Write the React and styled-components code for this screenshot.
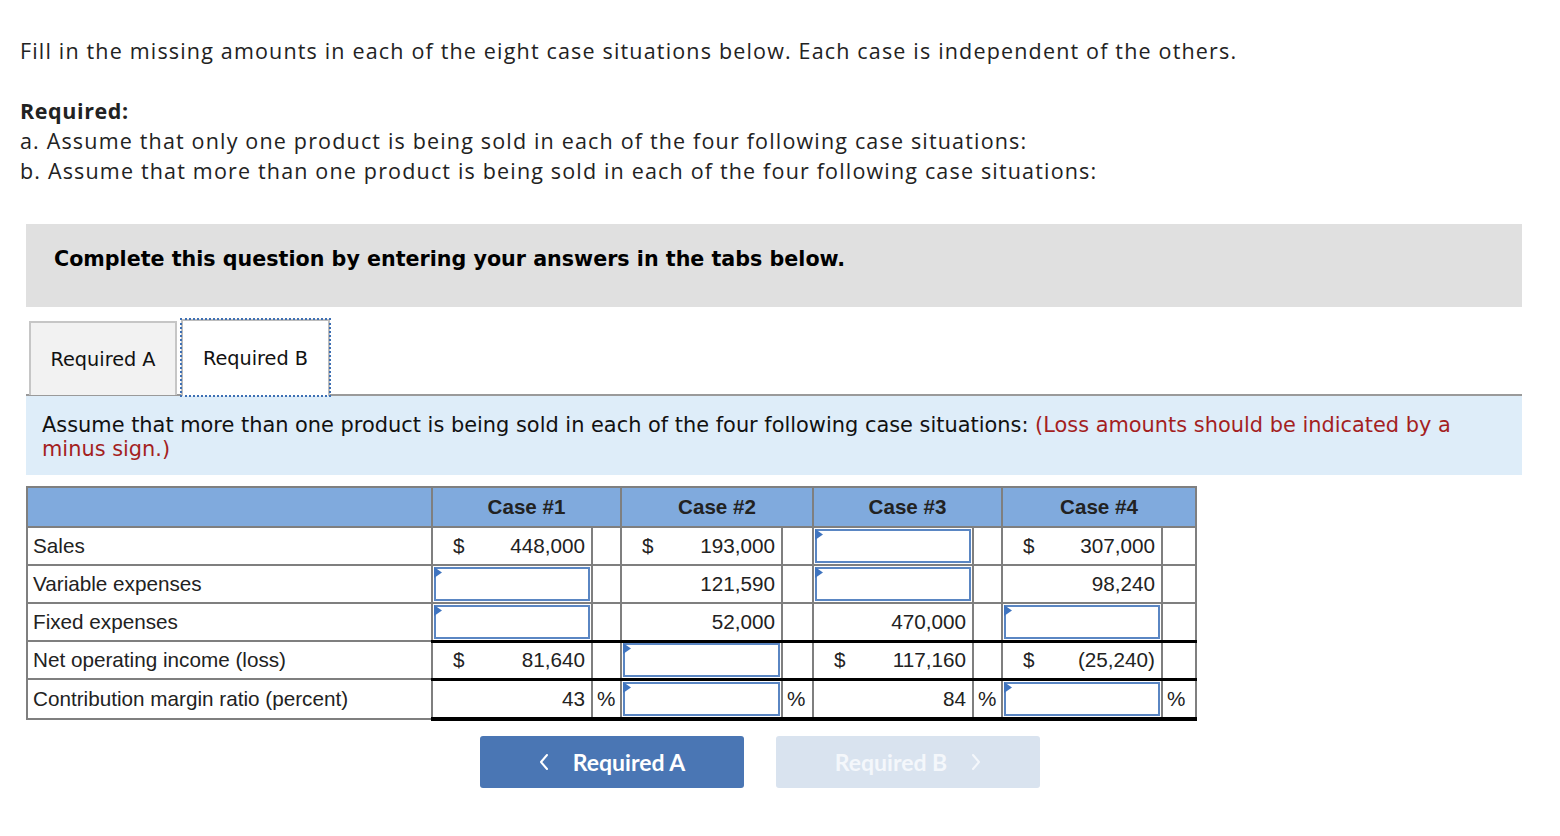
import React from "react";
import styled, { createGlobalStyle, css } from "styled-components";

const Global = createGlobalStyle`
  html, body { margin: 0; padding: 0; background: #fff; }
  body { font-family: "Open Sans", sans-serif; color: #222; }
  * { box-sizing: border-box; }
`;

const Page = styled.div`
  width: 1560px;
  padding: 36px 20px 40px 20px;
`;

const Intro = styled.div`
  font-family: "Open Sans", "Lato", sans-serif;
  font-size: 21.5px;
  letter-spacing: 1.17px;
  line-height: 30px;
  color: #222;
`;

const Para = styled.p`
  margin: 0 0 30px 0;
`;

const Strong = styled.div`
  font-weight: 700;
  letter-spacing: 0.6px;
`;

const Panel = styled.div`
  margin: 38px 18px 0 6px;
`;

const Banner = styled.div`
  background: #e0e0e0;
  height: 83px;
  padding: 23px 28px;
  font-family: "DejaVu Sans", Verdana, sans-serif;
  font-weight: 700;
  font-size: 20.65px;
  line-height: 24px;
  color: #000;
`;

const TabBar = styled.div`
  display: flex;
  align-items: flex-end;
  gap: 4px;
  padding-left: 3px;
  border-bottom: 2px solid #9a9a9a;
  height: 89px;
`;

const Tab = styled.div`
  width: 148px;
  height: 74px;
  display: flex;
  align-items: center;
  justify-content: center;
  font-family: "DejaVu Sans", Verdana, sans-serif;
  font-size: 19.3px;
  color: #111;
  border: 2px solid #c6c6c6;
  border-bottom: none;
  background: #f2f2f2;
  margin-bottom: -1px;
  ${(p) =>
    p.$active &&
    css`
      background: #fff;
      height: 77px;
      width: 149px;
      border-color: #bdbdbd;
      outline: 2px dotted #3d6fb3;
      outline-offset: -1px;
      margin-bottom: -2px;
    `}
`;

const Info = styled.div`
  background: #deedf9;
  height: 79px;
  padding: 17px 16px 15px 16px;
  font-family: "DejaVu Sans", Verdana, sans-serif;
  font-size: 20.9px;
  line-height: 24px;
  color: #111;
  white-space: nowrap;
`;

const Red = styled.span`
  color: #a41f1f;
`;

const Table = styled.table`
  margin-top: 11px;
  border-collapse: collapse;
  table-layout: fixed;
  width: 1169px;
  font-family: "Liberation Sans", Arial, sans-serif;
  font-size: 20.7px;
  color: #222;
`;

const HeadCell = styled.th`
  background: #80aadd;
  border: 2px solid #7f7f7f;
  height: 40px;
  font-weight: 700;
  font-size: 20.6px;
  text-align: center;
  padding: 0;
  color: #222;
`;

const Row = styled.tr`
  height: ${(p) => (p.$last ? 40 : 38)}px;
`;

const LabelCell = styled.td`
  border: 2px solid #7f7f7f;
  padding: 0 5px;
  white-space: nowrap;
`;

const ValCell = styled.td`
  border: 2px solid #7f7f7f;
  padding: 0;
  position: relative;
  ${(p) => p.$topBlack && css`border-top: 3px solid #000;`}
  ${(p) => p.$bottomBlack && css`border-bottom: 4px solid #000;`}
`;

const ValInner = styled.div`
  display: flex;
  justify-content: space-between;
  align-items: center;
  padding: 0 6px 0 20px;
  height: 100%;
`;

const Num = styled.span`
  margin-left: auto;
`;

const PctText = styled.div`
  padding-left: 4px;
`;

const InputBox = styled.div`
  position: relative;
  margin: 0 1px;
  height: 34px;
  border: 2px solid #5a86c3;
  background: #fff;
`;

const FlagSvg = styled.svg`
  position: absolute;
  left: -2px;
  top: -2px;
  display: block;
`;

const Flag = () => (
  <FlagSvg width="8" height="11" viewBox="0 0 8 11">
    <path d="M0 0 L8 5.5 L0 11 Z" fill="#3f74bf" />
  </FlagSvg>
);

const Buttons = styled.div`
  display: flex;
  gap: 32px;
  padding-left: 454px;
  margin-top: 15px;
`;

const NavButton = styled.div`
  width: 264px;
  height: 52px;
  border-radius: 3px;
  display: flex;
  align-items: center;
  justify-content: center;
  gap: 24px;
  font-family: "Lato", "Open Sans", sans-serif;
  font-weight: 700;
  font-size: 23px;
  color: #fff;
  background: ${(p) => (p.$disabled ? "#d9e3ef" : "#4a76b4")};
  ${(p) => p.$disabled && css`color: #f4f7fb;`}
`;

const Chevron = ({ dir }) => (
  <svg width="10" height="18" viewBox="0 0 10 18" fill="none">
    <path
      d={dir === "left" ? "M8 2 L2 9 L8 16" : "M2 2 L8 9 L2 16"}
      stroke="currentColor"
      strokeWidth="2"
      strokeLinecap="round"
      strokeLinejoin="round"
    />
  </svg>
);

const Input = () => (
  <InputBox>
    <Flag />
  </InputBox>
);

const rows = [
  {
    label: "Sales",
    cells: [
      { d: true, v: "448,000" },
      { d: true, v: "193,000" },
      { input: true },
      { d: true, v: "307,000" },
    ],
  },
  {
    label: "Variable expenses",
    cells: [{ input: true }, { v: "121,590" }, { input: true }, { v: "98,240" }],
  },
  {
    label: "Fixed expenses",
    cells: [{ input: true }, { v: "52,000" }, { v: "470,000" }, { input: true }],
  },
  {
    label: "Net operating income (loss)",
    top: true,
    cells: [
      { d: true, v: "81,640" },
      { input: true },
      { d: true, v: "117,160" },
      { d: true, v: "(25,240)" },
    ],
  },
  {
    label: "Contribution margin ratio (percent)",
    top: true,
    last: true,
    pct: true,
    cells: [{ v: "43" }, { input: true }, { v: "84" }, { input: true }],
  },
];

export default function App() {
  return (
    <Page>
      <Global />
      <Intro>
        <Para>
          Fill in the missing amounts in each of the eight case situations below. Each case is
          independent of the others.
        </Para>
        <Strong>Required:</Strong>
        <div>a. Assume that only one product is being sold in each of the four following case situations:</div>
        <div>b. Assume that more than one product is being sold in each of the four following case situations:</div>
      </Intro>
      <Panel>
        <Banner>Complete this question by entering your answers in the tabs below.</Banner>
        <TabBar>
          <Tab>Required A</Tab>
          <Tab $active>Required B</Tab>
        </TabBar>
        <Info>
          Assume that more than one product is being sold in each of the four following case
          situations: <Red>(Loss amounts should be indicated by a<br />minus sign.)</Red>
        </Info>
        <Table>
          <colgroup>
            <col style={{ width: 405 }} />
            <col style={{ width: 160 }} />
            <col style={{ width: 29 }} />
            <col style={{ width: 161 }} />
            <col style={{ width: 31 }} />
            <col style={{ width: 160 }} />
            <col style={{ width: 29 }} />
            <col style={{ width: 160 }} />
            <col style={{ width: 34 }} />
          </colgroup>
          <thead>
            <tr>
              <HeadCell />
              <HeadCell colSpan={2}>Case #1</HeadCell>
              <HeadCell colSpan={2}>Case #2</HeadCell>
              <HeadCell colSpan={2}>Case #3</HeadCell>
              <HeadCell colSpan={2}>Case #4</HeadCell>
            </tr>
          </thead>
          <tbody>
            {rows.map((r) => (
              <Row key={r.label} $last={r.last}>
                <LabelCell>{r.label}</LabelCell>
                {r.cells.map((c, i) => (
                  <React.Fragment key={i}>
                    <ValCell $topBlack={r.top} $bottomBlack={r.last}>
                      {c.input ? (
                        <Input />
                      ) : (
                        <ValInner>
                          {c.d && <span>$</span>}
                          <Num>{c.v}</Num>
                        </ValInner>
                      )}
                    </ValCell>
                    <ValCell $topBlack={r.top} $bottomBlack={r.last}>
                      {r.pct && <PctText>%</PctText>}
                    </ValCell>
                  </React.Fragment>
                ))}
              </Row>
            ))}
          </tbody>
        </Table>
        <Buttons>
          <NavButton>
            <Chevron dir="left" />
            Required A
          </NavButton>
          <NavButton $disabled>
            Required B
            <Chevron dir="right" />
          </NavButton>
        </Buttons>
      </Panel>
    </Page>
  );
}
